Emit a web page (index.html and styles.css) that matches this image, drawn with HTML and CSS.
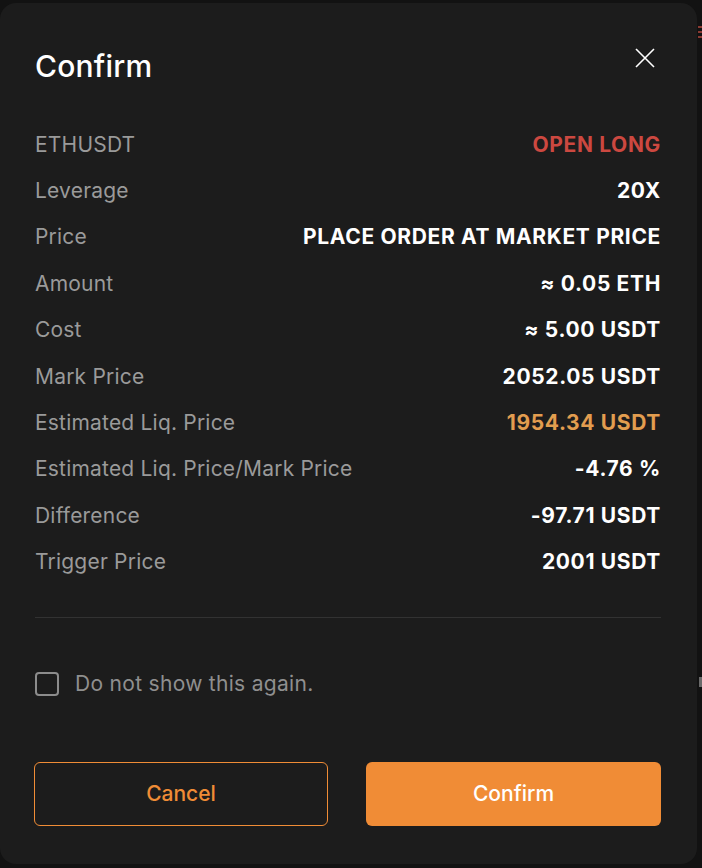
FILE: index.html
```html
<!DOCTYPE html>
<html>
<head>
<meta charset="utf-8">
<link rel="stylesheet" href="styles.css">
</head>
<body>
<div class="edge">
  <span class="edge-bar"></span><span class="edge-bar"></span><span class="edge-bar"></span>
</div>
<div class="edge-low"></div>
<div class="modal">
  <div class="header">
    <h1 class="title">Confirm</h1>
    <button class="close" aria-label="Close">
      <svg width="20" height="20" viewBox="0 0 20 20"><path d="M1 1 L19 19 M19 1 L1 19" stroke="#ffffff" stroke-width="1.6" fill="none"/></svg>
    </button>
  </div>
  <div class="rows">
    <div class="row"><span class="label">ETHUSDT</span><span class="value red">OPEN LONG</span></div>
    <div class="row"><span class="label">Leverage</span><span class="value">20X</span></div>
    <div class="row"><span class="label">Price</span><span class="value">PLACE ORDER AT MARKET PRICE</span></div>
    <div class="row"><span class="label">Amount</span><span class="value">≈ 0.05 ETH</span></div>
    <div class="row"><span class="label">Cost</span><span class="value">≈ 5.00 USDT</span></div>
    <div class="row"><span class="label">Mark Price</span><span class="value">2052.05 USDT</span></div>
    <div class="row"><span class="label">Estimated Liq. Price</span><span class="value orange">1954.34 USDT</span></div>
    <div class="row"><span class="label">Estimated Liq. Price/Mark Price</span><span class="value">-4.76 %</span></div>
    <div class="row"><span class="label">Difference</span><span class="value">-97.71 USDT</span></div>
    <div class="row"><span class="label">Trigger Price</span><span class="value">2001 USDT</span></div>
  </div>
  <div class="divider"></div>
  <label class="check">
    <span class="box"></span>
    <span class="check-text">Do not show this again.</span>
  </label>
  <div class="actions">
    <button class="btn btn-cancel">Cancel</button>
    <button class="btn btn-confirm">Confirm</button>
  </div>
</div>
</body>
</html>
```

FILE: styles.css
```css
html, body {
  margin: 0;
  padding: 0;
  background: #121212;
  width: 702px;
  height: 868px;
  overflow: hidden;
  font-family: "Inter", "Noto Sans", sans-serif;
}
.edge {
  position: absolute;
  left: 698px;
  top: 26px;
  display: flex;
  flex-direction: column;
  gap: 3px;
}
.edge-bar {
  display: block;
  width: 4px;
  height: 2px;
  background: #8a3a32;
}
.edge-low {
  position: absolute;
  left: 699px;
  top: 677px;
  width: 3px;
  height: 10px;
  background: #6a6a6a;
}
.modal {
  box-sizing: border-box;
  margin-top: 3px;
  width: 697px;
  height: 861px;
  background: #1c1c1c;
  border-radius: 16px;
  padding: 0 36px 0 35px;
  display: flex;
  flex-direction: column;
}
.header {
  display: flex;
  justify-content: space-between;
  align-items: center;
  height: 60px;
  margin-top: 33px;
}
.title {
  margin: 0;
  font-size: 30px;
  font-weight: 500;
  color: #ffffff;
  letter-spacing: 0.2px;
}
.close {
  background: none;
  border: 0;
  padding: 0;
  margin-right: 6px;
  margin-top: -16px;
  width: 20px;
  height: 20px;
  cursor: pointer;
}
.close svg { display: block; }
.rows {
  margin-top: 25px;
  display: flex;
  flex-direction: column;
}
.row {
  display: flex;
  justify-content: space-between;
  align-items: center;
  height: 46.4px;
  font-size: 21px;
}
.label {
  color: #9a9a9a;
  letter-spacing: 0.2px;
}
.value {
  color: #ffffff;
  font-weight: 700;
  letter-spacing: 0.65px;
}
.value.red { color: #cc4840; }
.value.orange { color: #e29d4f; }
.divider {
  margin-top: 32px;
  height: 1px;
  background: #323232;
}
.check {
  margin-top: 53px;
  display: flex;
  align-items: center;
  gap: 16px;
  height: 26px;
}
.box {
  box-sizing: border-box;
  width: 24px;
  height: 24px;
  border: 2px solid #8c8c8c;
  border-radius: 4px;
}
.check-text {
  font-size: 21px;
  color: #8f8f8f;
  letter-spacing: 0.3px;
}
.actions {
  margin-top: 65px;
  display: flex;
  justify-content: space-between;
  margin-left: -1px;
}
.btn {
  box-sizing: border-box;
  height: 64px;
  border-radius: 6px;
  font-family: inherit;
  font-size: 21px;
  font-weight: 500;
  cursor: pointer;
}
.btn-cancel {
  width: 294px;
  background: transparent;
  border: 1px solid #f08c36;
  color: #f08c36;
}
.btn-confirm {
  width: 295px;
  background: #f08c36;
  border: 0;
  color: #ffffff;
}
```
